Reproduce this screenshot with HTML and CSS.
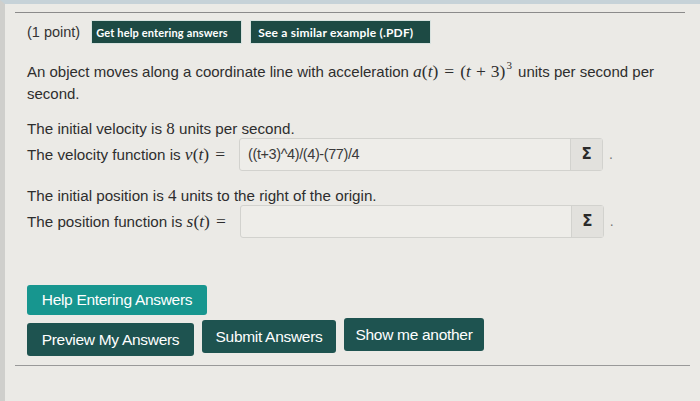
FILE: index.html
```html
<!DOCTYPE html>
<html>
<head>
<meta charset="utf-8">
<link rel="stylesheet" href="styles.css">
</head>
<body>
<div class="frame">
  <div class="content">
    <div class="rule top-rule"></div>
    <div class="problem">
      <div class="header">
        <span class="points">(1 point)</span>
        <span class="tag tag-help">Get help entering answers</span>
        <span class="tag tag-example">See a similar example (.PDF)</span>
      </div>
      <p class="statement"><span>An object moves along a coordinate line with acceleration</span> <span class="math"><i>a</i>(<i>t</i>)<span class="eq">=</span>(<i>t</i><span class="op">+</span>3)<sup>3</sup></span> <span>units per second per</span><br><span>second.</span></p>

      <div class="block">
        <div class="line">The initial velocity is <span class="math num">8</span> units per second.</div>
        <div class="line answer-line">
          <span>The velocity function is <span class="math"><i>v</i>(<i>t</i>)<span class="eq">=</span></span></span>
          <span class="answer">
            <span class="answer-text">((t+3)^4)/(4)-(77)/4</span>
            <span class="sigma">Σ</span>
          </span>
          <span class="dot">.</span>
        </div>
      </div>

      <div class="block block2">
        <div class="line">The initial position is <span class="math num">4</span> units to the right of the origin.</div>
        <div class="line answer-line">
          <span>The position function is <span class="math"><i>s</i>(<i>t</i>)<span class="eq">=</span></span></span>
          <span class="answer">
            <span class="answer-text"></span>
            <span class="sigma">Σ</span>
          </span>
          <span class="dot">.</span>
        </div>
      </div>

      <div class="actions">
        <div class="btn-row"><span class="btn btn-light">Help Entering Answers</span></div>
        <div class="btn-row btn-row2">
          <span class="btn btn-dark btn-preview">Preview My Answers</span>
          <span class="btn btn-dark btn-submit">Submit Answers</span>
          <span class="btn btn-dark btn-another">Show me another</span>
        </div>
      </div>
    </div>
    <div class="rule bottom-rule"></div>
  </div>
</div>
</body>
</html>
```

FILE: styles.css
```css
html, body {
  margin: 0;
  padding: 0;
}
body {
  background: #ebeae6;
  font-family: "Liberation Sans", Arial, sans-serif;
  color: #2e2e2e;
  width: 700px;
  height: 401px;
  overflow: hidden;
}
.frame {
  height: 397px;
  border-top: 4px solid #c6d2d8;
  border-left: 5px solid #cfcfcc;
}
.content {
  padding: 0 15px 0 10px;
}
.rule {
  height: 1px;
  background: #8b8b8b;
}
.top-rule {
  margin-top: 8px;
}
.problem {
  padding-left: 12px;
}
.header {
  display: flex;
  align-items: center;
  margin-top: 8px;
  height: 22px;
}
.points {
  font-size: 14.5px;
  color: #333;
  margin-right: 12px;
}
.tag {
  background: #1d4a44;
  color: #ffffff;
  font-family: Lato, "Open Sans", sans-serif;
  font-weight: 700;
  height: 22px;
  display: flex;
  align-items: center;
  box-sizing: border-box;
  box-shadow: 0 0 0 1px #d8e2df;
  white-space: nowrap;
}
.tag-help {
  font-size: 11px;
  padding: 0 4px;
  width: 149px;
  letter-spacing: 0.15px;
}
.tag-example {
  font-size: 12px;
  padding: 0 7px;
  margin-left: 10px;
  width: 179px;
  letter-spacing: 0.2px;
}
.statement {
  font-size: 15px;
  line-height: 22px;
  margin: 17px 0 0 0;
  width: 640px;
}
.math {
  font-family: "Liberation Serif", "Times New Roman", serif;
  font-size: 17.5px;
  white-space: nowrap;
}
.eq {
  margin: 0 6px;
}
.op {
  margin: 0 5px;
}
.math sup {
  font-size: 11px;
  vertical-align: 8px;
  line-height: 0;
  margin-left: 1px;
  margin-right: 2px;
}
.num {
  font-size: 17px;
}
.block {
  margin-top: 14px;
  font-size: 15.2px;
}
.block2 {
  margin-top: 15px;
}
.line {
  line-height: 19px;
}
.answer-line {
  display: flex;
  align-items: center;
  margin-top: 0;
}
.answer {
  display: flex;
  width: 364px;
  height: 33px;
  margin-left: 8px;
  border: 1px solid #d2d2ce;
  border-radius: 3px;
  background: #eeede9;
  box-sizing: border-box;
}
.answer-text {
  flex: 1;
  display: flex;
  align-items: center;
  padding-left: 8px;
  font-size: 14.5px;
  color: #3a3a3a;
  letter-spacing: -0.4px;
}
.sigma {
  width: 31px;
  display: flex;
  align-items: center;
  justify-content: center;
  border-left: 1px solid #d2d2ce;
  background: #e2e1dd;
  font-family: "DejaVu Sans", sans-serif;
  font-weight: 700;
  font-size: 15px;
  color: #2a2a2a;
}
.dot {
  margin-left: 6px;
  color: #777;
  font-size: 14px;
}
.actions {
  margin-top: 47px;
}
.btn-row {
  display: flex;
  gap: 8px;
}
.btn-row2 {
  margin-top: 3px;
  align-items: flex-start;
}
.btn {
  color: #ffffff;
  font-size: 15.5px;
  border-radius: 3px;
  display: flex;
  align-items: center;
  justify-content: center;
  box-sizing: border-box;
  padding: 0 10px;
  letter-spacing: -0.3px;
  white-space: nowrap;
}
.btn-light {
  background: #17968f;
  height: 30px;
  width: 180px;
}
.btn-dark {
  background: #1e5350;
  height: 33px;
}
.btn-preview { width: 167px; margin-top: 5px; }
.btn-submit { width: 134px; margin-top: 2px; }
.btn-another { width: 140px; }
.bottom-rule {
  margin-top: 9px;
  margin-right: -5px;
  background: #999;
}
```
